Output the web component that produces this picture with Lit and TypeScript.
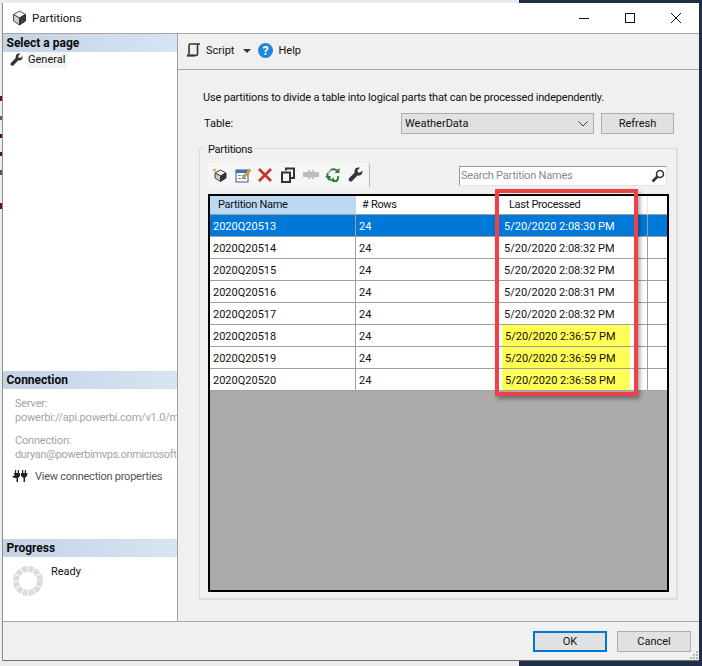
import { LitElement, html, css, svg } from "lit";
import { customElement } from "lit/decorators.js";

const rows = [
  ["2020Q20513", "24", "5/20/2020 2:08:30 PM", "sel"],
  ["2020Q20514", "24", "5/20/2020 2:08:32 PM", ""],
  ["2020Q20515", "24", "5/20/2020 2:08:32 PM", ""],
  ["2020Q20516", "24", "5/20/2020 2:08:31 PM", ""],
  ["2020Q20517", "24", "5/20/2020 2:08:32 PM", ""],
  ["2020Q20518", "24", "5/20/2020 2:36:57 PM", "new"],
  ["2020Q20519", "24", "5/20/2020 2:36:59 PM", "new"],
  ["2020Q20520", "24", "5/20/2020 2:36:58 PM", "new"],
];

const wrench = svg`<svg width="16" height="16" viewBox="0 0 16 16"><path fill="#333" d="M14.6 3.2l-2.7 2.6-2-.5-.5-2L12 .8C10.2.1 8.2.6 7.2 2c-.8 1.1-.9 2.4-.5 3.5L1.3 11c-.9.9-.9 2 0 2.9s2 .8 2.8 0l5.400-5.500c1.200.4 2.600.2 3.600-.7 1.200-1.100 1.700-3 1-4.500z"/></svg>`;

@customElement("app-root")
export class AppRoot extends LitElement {
  static styles = css`
    :host {
      display: block;
      width: 702px;
      height: 666px;
      box-sizing: border-box;
      padding: 3px 3px 5px 2px;
      font-family: Roboto, "Liberation Sans", sans-serif;
      font-size: 11px;
      color: #111;
      background:
        linear-gradient(#5a1030, #5a1030) 0 96px / 2px 5px no-repeat,
        linear-gradient(#3a6a90, #3a6a90) 0 116px / 2px 4px no-repeat,
        linear-gradient(#5a1030, #5a1030) 0 134px / 2px 4px no-repeat,
        linear-gradient(#5a1030, #5a1030) 0 152px / 2px 4px no-repeat,
        linear-gradient(#555, #555) 0 170px / 2px 5px no-repeat,
        linear-gradient(#5a1030, #5a1030) 0 203px / 2px 6px no-repeat,
        linear-gradient(90deg, #ececec 0, #ececec 519px, #1f2d45 519px);
    }
    svg { display: block; flex: none; }
    .window {
      height: 658px;
      box-sizing: border-box;
      background: #f0f0f0;
      border-left: 1px solid #8e8e8e;
      border-bottom: 1px solid #6e6e6e;
      display: flex;
      flex-direction: column;
    }
    .titlebar {
      height: 30px;
      background: #fff;
      border-bottom: 1px solid #a8a8a8;
      display: flex;
      align-items: center;
      padding-left: 9px;
      flex: none;
    }
    .title { margin-left: 4px; font-size: 11.5px; color: #111; flex: 1; }
    .winbtn { width: 46px; height: 30px; display: flex; align-items: center; justify-content: center; }
    .body { display: flex; height: 588px; flex: none; border-bottom: 1px solid #a8a8a8; box-sizing: border-box; }
    .side {
      width: 175px;
      flex: none;
      box-sizing: border-box;
      background: #fff;
      border-right: 1px solid #a0a0a0;
      display: flex;
      flex-direction: column;
    }
    .sec-pages { height: 337px; }
    .sec-conn { height: 168px; }
    .sec-prog { flex: 1; }
    .sec-h {
      height: 18px;
      line-height: 18px;
      padding-left: 3.5px;
      font-weight: 700;
      font-size: 12px;
      color: #0a0a0a;
      background: linear-gradient(90deg, #c4d4e5, #d6e4f3);
    }
    .gen { display: flex; align-items: center; height: 16px; margin-left: 7px; }
    .gen svg { width: 14px; height: 14px; }
    .gen span { margin-left: 3px; background: #f4f4f4; padding: 0 2px 0 1px; line-height: 16px; }
    .conn-info { padding: 8px 0 0 12px; color: #a4a4a4; line-height: 14px; white-space: nowrap; overflow: hidden; letter-spacing: -0.2px; }
    .conn-info .gap { height: 9px; }
    .conn-info .tight { letter-spacing: -0.34px; }
    .conn-link { display: flex; align-items: center; margin: 6px 0 0 9px; gap: 7px; color: #555; height: 16px; white-space: nowrap; letter-spacing: -0.24px; }
    .prog { display: flex; padding: 9px 0 0 10px; gap: 8px; }
    .prog span { line-height: 16px; margin-top: -2px; }
    .main { flex: 1; display: flex; flex-direction: column; min-width: 0; }
    .tools {
      height: 36px;
      flex: none;
      box-sizing: border-box;
      border-bottom: 1px solid #a8a8a8;
      display: flex;
      align-items: center;
      padding: 0 0 3px 8px;
    }
    .tools .t { margin-left: 5px; }
    .tools .caret { width: 0; height: 0; border: 4px solid transparent; border-top: 4px solid #333; border-bottom: 0; margin: 1px 7px 0 9px; }
    .content { flex: 1; display: flex; flex-direction: column; padding-left: 21px; padding-right: 21px; }
    .intro { margin: 20px 0 0 4px; line-height: 16px; height: 16px; letter-spacing: -0.18px; white-space: nowrap; }
    .tablerow { display: flex; align-items: center; margin-top: 7px; height: 21px; padding-left: 5px; }
    .tablerow .lbl { width: 197px; }
    .btn {
      box-sizing: border-box;
      background: #e1e1e1;
      border: 1px solid #adadad;
      display: flex;
      align-items: center;
      justify-content: center;
      height: 21px;
    }
    .combo { width: 193px; justify-content: space-between; padding: 0 5px 0 3px; }
    .refresh { width: 73px; margin-left: 7px; }
    .group {
      margin-top: 14px;
      height: 452px;
      box-sizing: border-box;
      border: 1px solid #dcdcdc;
      border-width: 1px 2px 2px 1px;
      position: relative;
      padding: 14px 7px 0 8px;
    }
    .legend { position: absolute; left: 5px; top: -6px; background: #f0f0f0; padding: 0 3px; line-height: 14px; letter-spacing: -0.3px; }
    .gtools { display: flex; align-items: flex-start; justify-content: space-between; height: 31px; }
    .tstrip {
      width: 162px;
      height: 24px;
      box-sizing: border-box;
      background: #f6f6f6;
      border-radius: 3px 3px 0 0;
      border-right: 1px solid #b5b5b5;
      display: flex;
      align-items: center;
      padding-left: 4px;
      gap: 6.7px;
    }
    .search {
      width: 208px;
      height: 20px;
      margin: 3px 2px 0 0;
      box-sizing: border-box;
      background: #fff;
      border: 1px solid;
      border-color: #9a9a9a #e4e4e4 #e4e4e4 #9a9a9a;
      display: flex;
      align-items: center;
      justify-content: space-between;
      padding: 0 1px 1px 1px;
      color: #8a8a8a;
      letter-spacing: -0.2px;
    }
    .grid {
      position: relative;
      height: 398px;
      box-sizing: border-box;
      border: 2px solid #000;
      background: #ababab;
    }
    .row { display: grid; grid-template-columns: 146px 142px 150px 19px; grid-template-rows: 100%; height: 22px; box-sizing: border-box; background: #fff; }
    .row > div {
      box-sizing: border-box;
      border-right: 1px solid #a0a0a0;
      border-bottom: 1px solid #a0a0a0;
      padding-left: 3px;
      line-height: 23px;
      white-space: nowrap;
    }
    .row > div:last-child { border-right: 0; }
    .head { height: 19px; letter-spacing: -0.3px; }
    .head > div { line-height: 18px; border-right-color: #e4e4e4; border-bottom-color: #a0a0a0; padding-left: 6px; }
    .head > div:first-child { background: #bbd9f3; padding-left: 8px; border-right-color: #bbd9f3; }
    .sel { background: #0078d7; color: #fff; }
    .c3 { padding-left: 6px !important; }
    .head .c3 { padding-left: 11px !important; }
    .c3.new { padding-left: 4px !important; }
    .new span { display: block; width: 128px; height: 21px; background: #ffff55; padding-left: 3px; box-sizing: border-box; }
    .frame {
      position: absolute;
      left: 285px;
      top: -7px;
      width: 143px;
      height: 207px;
      box-sizing: border-box;
      border: 4px solid #ee4248;
      box-shadow: 2px 3px 4px rgba(0, 0, 0, 0.35);
    }
    .footer {
      flex: 1;
      display: flex;
      justify-content: flex-end;
      align-items: flex-start;
      padding: 9px 8px 0 0;
      gap: 10px;
      position: relative;
    }
    .footer .btn { width: 74px; height: 21px; }
    .footer .ok { border: 2px solid #0078d7; }
    .grip { position: absolute; right: 0; bottom: 0; }
  `;

  render() {
    return html`<div class="window">
      <div class="titlebar">
        <svg width="16" height="16" viewBox="0 0 16 16"><path fill="#f4f4f4" stroke="#4a4a4a" d="M1.500 4.500 7.500 1 13.500 4.500 7.500 8z"/><path fill="#cfcfcf" stroke="#4a4a4a" d="M1.500 4.500V11L7.500 15V8z"/><path fill="#3c3c3c" stroke="#333" d="M7.500 8V15L13.500 11V4.500z"/></svg>
        <div class="title">Partitions</div>
        <div class="winbtn"><svg width="10" height="10"><path d="M0 5.500H10" stroke="#111"/></svg></div>
        <div class="winbtn"><svg width="10" height="10"><rect x=".5" y=".5" width="9" height="9" fill="none" stroke="#111"/></svg></div>
        <div class="winbtn"><svg width="10" height="10"><path d="M0 0 10 10M10 0 0 10" stroke="#111"/></svg></div>
      </div>
      <div class="body">
        <div class="side">
          <div class="sec-pages">
            <div class="sec-h">Select a page</div>
            <div class="gen">${wrench}<span>General</span></div>
          </div>
          <div class="sec-conn">
            <div class="sec-h">Connection</div>
            <div class="conn-info">
              <div>Server:</div><div>powerbi://api.powerbi.com/v1.0/m</div>
              <div class="gap"></div>
              <div>Connection:</div><div class="tight">duryan@powerbimvps.onmicrosoft</div>
            </div>
            <div class="conn-link">
              <svg width="16" height="14" viewBox="0 0 16 14"><path fill="#222" d="M3 1h1.200v3h1.600V1H7v3h1v3L6 9v4H4.500V9H2L0 7h2.500L2 4h1zM10 1h1.200v3h1.600V1H14v3h1.500L15 7l-2 2v4h-1.500V9L9 7V4h1z"/></svg>
              <span>View connection properties</span>
            </div>
          </div>
          <div class="sec-prog">
            <div class="sec-h">Progress</div>
            <div class="prog">
              <svg width="30" height="30" viewBox="0 0 30 30"><circle cx="15" cy="15" r="12" fill="none" stroke="#dcdcdc" stroke-width="6" stroke-dasharray="5.280 1"/></svg>
              <span>Ready</span>
            </div>
          </div>
        </div>
        <div class="main">
          <div class="tools">
            <svg width="15" height="16" viewBox="0 0 15 16"><path fill="none" stroke="#333" stroke-width="1.600" d="M3 2h11M4 2C3 2 3 3 3 4v8M12.500 2c-1 0-1 1-1 2v8c0 1-.7 1.500-1.500 1.500H1"/><path stroke="#333" stroke-width="2" d="M1 13.500h8"/></svg>
            <span class="t">Script</span>
            <span class="caret"></span>
            <svg width="15" height="15" viewBox="0 0 16 16"><circle cx="8" cy="8" r="8" fill="#1e88d8"/><text x="8" y="12.600" font-size="13" font-weight="700" fill="#fff" text-anchor="middle" font-family="Roboto">?</text></svg>
            <span class="t">Help</span>
          </div>
          <div class="content">
            <div class="intro">Use partitions to divide a table into logical parts that can be processed independently.</div>
            <div class="tablerow">
              <span class="lbl">Table:</span>
              <div class="btn combo"><span>WeatherData</span>
                <svg width="10" height="6"><path d="M.5.5 5 5 9.500.5" fill="none" stroke="#333"/></svg></div>
              <div class="btn refresh">Refresh</div>
            </div>
            <div class="group">
              <span class="legend">Partitions</span>
              <div class="gtools">
                <div class="tstrip">
                  <svg width="16" height="16" viewBox="0 0 16 16"><path fill="#eee" stroke="#444" d="M3 6 8.500 3 14 6 8.500 9z"/><path fill="#ccc" stroke="#444" d="M3 6v5l5.500 3.500V9z"/><path fill="#333" stroke="#333" d="M8.500 9v5.500L14 11V6z"/><circle cx="2.500" cy="3" r="1.500" fill="#f0a030"/></svg>
                  <svg width="16" height="16" viewBox="0 0 16 16"><rect x="1" y="3" width="12" height="12" fill="#fff" stroke="#2d5a92"/><rect x="1" y="3" width="12" height="3" fill="#3d70b0"/><path d="M3 8h3v1H3zM7 8h4v1H7zM3 11h3v1H3zM7 11h4v1H7z" fill="#6a8ab0"/><path d="M8 9 14 2l2 1.500L10 10.500 7.500 11z" fill="#e0a040" stroke="#8a6020" stroke-width=".5"/></svg>
                  <svg width="16" height="16" viewBox="0 0 16 16"><path d="M2 2 14 14M14 2 2 14" stroke="#c0392b" stroke-width="2.800"/></svg>
                  <svg width="16" height="16" viewBox="0 0 16 16"><path fill="none" stroke="#333" stroke-width="2" d="M6 3.500V1.500H14V11H11M2 5.500H10V15H2z"/></svg>
                  <svg width="16" height="16" viewBox="0 0 16 16"><path fill="#bcbcbc" d="M0 5h5V2l3 3 3-3v3h5v5h-5v3L8 10l-3 3v-3H0z"/></svg>
                  <svg width="16" height="16" viewBox="0 0 16 16"><path fill="none" stroke="#2f7d32" stroke-width="2" d="M6 3c1-1 4-1.500 6 .5M3 6c-1 2-.5 5 1.500 7M13 9c.5 2 0 3.500-1.500 5H8"/><path fill="#2f7d32" d="M9.500 6h5V1zM0 9h5.500v5zM9 10.500v5l-4-2.500z"/><path fill="#888" d="M3 5l3-3 1 1-3 3z"/></svg>
                  ${wrench}
                </div>
                <div class="search"><span>Search Partition Names</span>
                  <svg width="14" height="14" viewBox="0 0 14 14"><circle cx="9" cy="5" r="3.500" fill="#fff" stroke="#333" stroke-width="1.600"/><path d="M6.500 7.500 1.500 12.500" stroke="#333" stroke-width="2.600"/></svg></div>
              </div>
              <div class="grid">
                <div class="row head"><div>Partition Name</div><div># Rows</div><div class="c3">Last Processed</div><div></div></div>
                ${rows.map(
                  (r) => html`<div class="row ${r[3] === "sel" ? "sel" : ""}">
                    <div>${r[0]}</div><div>${r[1]}</div>
                    ${r[3] === "new"
                      ? html`<div class="c3 new"><span>${r[2]}</span></div>`
                      : html`<div class="c3">${r[2]}</div>`}
                    <div></div>
                  </div>`
                )}
                <div class="frame"></div>
              </div>
            </div>
          </div>
        </div>
      </div>
      <div class="footer">
        <div class="btn ok">OK</div>
        <div class="btn">Cancel</div>
        <svg class="grip" width="9" height="9" viewBox="0 0 9 9"><path fill="#b5b5b5" d="M6 0h2v2H6zM3 3h2v2H3zM6 3h2v2H6zM0 6h2v2H0zM3 6h2v2H3zM6 6h2v2H6z"/></svg>
      </div>
    </div>`;
  }
}
